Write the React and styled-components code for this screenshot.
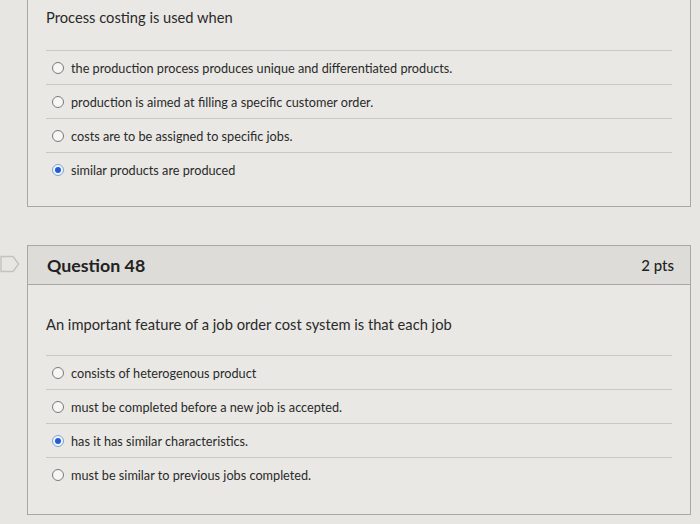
import React from "react";
import styled, { createGlobalStyle } from "styled-components";

const Global = createGlobalStyle`
  html, body { margin: 0; padding: 0; background: #e7e6e2; }
  body { font-family: Lato, "Open Sans", sans-serif; color: #2a2a2a; width: 700px; height: 524px; overflow: hidden; }
`;

const Page = styled.div`
  display: flex;
  flex-direction: column;
  gap: 38px;
  padding: 0 9px 0 27px;
`;

const Card = styled.section`
  position: relative;
  background: #e9e8e4;
  border: 1px solid #a9a8a4;
  ${(p) => (p.$cut ? "border-top: none;" : "")}
`;

const Header = styled.header`
  box-sizing: border-box;
  display: flex;
  align-items: center;
  justify-content: space-between;
  height: 39px;
  padding: 0 16px 0 19px;
  background: #dddcd8;
  border-bottom: 1px solid #a9a8a4;
`;

const Title = styled.h2`
  margin: 0;
  font-size: 17.8px;
  font-weight: 700;
  color: #222;
`;

const Points = styled.span`
  font-size: 15px;
  font-weight: 500;
  color: #222;
`;

const Flag = styled.svg`
  position: absolute;
  left: -28px;
  top: 9px;
`;

const Body = styled.div`
  padding: ${(p) => p.$pad} 18px ${(p) => p.$bottom} 18px;
`;

const Prompt = styled.p`
  margin: 0 0 ${(p) => p.$gap} 0;
  font-size: 14.7px;
  line-height: 20px;
`;

const Answers = styled.div`
  display: flex;
  flex-direction: column;
`;

const Answer = styled.label`
  box-sizing: border-box;
  display: flex;
  align-items: center;
  gap: 7px;
  height: 34px;
  border-top: 1px solid #c9c8c4;
  font-size: 12.7px;
  color: #2a2a2a;
  padding-left: 6px;
`;

const Radio = styled.span`
  box-sizing: border-box;
  width: 12px;
  height: 12px;
  border-radius: 50%;
  background: #f6f6f4;
  border: ${(p) => (p.$on ? "1.5px solid #7e9fdc" : "1px solid #7a7a78")};
  display: flex;
  align-items: center;
  justify-content: center;
  &::after {
    content: "";
    display: ${(p) => (p.$on ? "block" : "none")};
    width: 6px;
    height: 6px;
    border-radius: 50%;
    background: #1c5ed6;
  }
`;

const q1 = [
  "the production process produces unique and differentiated products.",
  "production is aimed at filling a specific customer order.",
  "costs are to be assigned to specific jobs.",
  "similar products are produced",
];
const q2 = [
  "consists of heterogenous product",
  "must be completed before a new job is accepted.",
  "has it has similar characteristics.",
  "must be similar to previous jobs completed.",
];

function List({ items, selected }) {
  return (
    <Answers>
      {items.map((t, i) => (
        <Answer key={i}>
          <Radio $on={i === selected} />
          {t}
        </Answer>
      ))}
    </Answers>
  );
}

export default function App() {
  return (
    <>
      <Global />
      <Page>
        <Card $cut>
          <Body $pad="7px" $bottom="20px">
            <Prompt $gap="23px">Process costing is used when</Prompt>
            <List items={q1} selected={3} />
          </Body>
        </Card>
        <Card>
          <Flag width="20" height="18" viewBox="0 0 20 18">
            <path d="M1 1.5 H13 L18.5 9 L13 16.5 H1 Z" fill="none" stroke="#c4c3bf" strokeWidth="1.4" strokeLinejoin="round" />
          </Flag>
          <Header>
            <Title>Question 48</Title>
            <Points>2 pts</Points>
          </Header>
          <Body $pad="29px" $bottom="23px">
            <Prompt $gap="21px">An important feature of a job order cost system is that each job</Prompt>
            <List items={q2} selected={2} />
          </Body>
        </Card>
      </Page>
    </>
  );
}
